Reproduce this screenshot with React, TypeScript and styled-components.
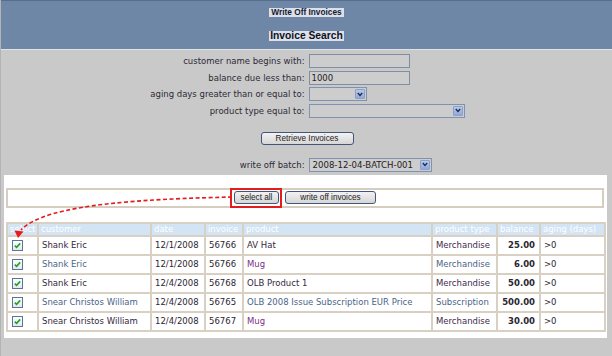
import React from "react";
import styled, { createGlobalStyle } from "styled-components";

const GlobalStyle = createGlobalStyle`
  html, body { margin: 0; padding: 0; }
  body {
    background: #c9c9c9;
    font-family: "DejaVu Sans", Verdana, sans-serif;
    font-size: 8.5px;
    color: #2e2a36;
  }
`;

const Page = styled.div`
  position: relative;
  width: 612px;
  height: 356px;
  overflow: hidden;
  background: #c9c9c9;
  box-sizing: border-box;
  border-left: 1px solid #b4b4b4;
`;

const Header = styled.header`
  height: 50px;
  box-sizing: border-box;
  background: #6f87a7;
  border-top: 1px solid #566d8e;
  border-bottom: 1px solid #dfe2e7;
  display: flex;
  flex-direction: column;
  align-items: center;
  padding-top: 7px;
`;

const AppTitle = styled.div`
  font-family: "Liberation Sans", Arial, sans-serif;
  font-weight: bold;
  font-size: 8.3px;
  line-height: 9px;
  color: #101a38;
  background: #dde0e6;
  padding: 0 2px;
`;

const SectionTitle = styled.div`
  margin-top: 14px;
  font-family: "Liberation Sans", Arial, sans-serif;
  font-weight: bold;
  font-size: 10.3px;
  line-height: 10px;
  color: #0a1028;
  background: #dde0e6;
  padding: 0 1px;
`;

const FormGrid = styled.div<{ $top: number }>`
  display: grid;
  grid-template-columns: 1fr 1fr;
  column-gap: 4px;
  row-gap: 2.6px;
  align-items: center;
  margin-top: ${(p) => p.$top}px;
`;

const Label = styled.label`
  text-align: right;
  line-height: 14px;
  white-space: nowrap;
  color: #2e2a36;
`;

const TextInput = styled.input<{ $w: number }>`
  width: ${(p) => p.$w}px;
  height: 14px;
  box-sizing: border-box;
  border: 1px solid #7f8fa3;
  background: #cdcdcd;
  font-family: "DejaVu Sans", Verdana, sans-serif;
  font-size: 8.5px;
  color: #222;
  padding: 0 2px;
  margin: 0;
  outline: none;
`;

const SelectBox = styled.div<{ $w: number }>`
  position: relative;
  width: ${(p) => p.$w}px;
  height: 14px;
  box-sizing: border-box;
  border: 1px solid #7f93b0;
  background: #cdcdcd;
  display: flex;
  align-items: center;
  padding-left: 3px;
  font-size: 8.6px;
  color: #222;
`;

const SelectArrow = styled.span`
  position: absolute;
  right: 1px;
  top: 1px;
  width: 10px;
  height: 10px;
  box-sizing: border-box;
  border: 1px solid #8aa0c6;
  border-radius: 1px;
  background: linear-gradient(#b6c8ec, #93a9d6);
  display: flex;
  align-items: center;
  justify-content: center;
`;

const ButtonRow = styled.div`
  display: flex;
  justify-content: center;
  margin-top: 14px;
  padding-left: 1px;
`;

const Button = styled.button<{ $w: number }>`
  width: ${(p) => p.$w}px;
  height: 13px;
  box-sizing: border-box;
  margin: 0;
  padding: 0;
  border: 1px solid #43567a;
  border-radius: 3px;
  background: linear-gradient(#f2f2f2, #d6d6d6);
  font-family: "Liberation Sans", Arial, sans-serif;
  font-size: 8.2px;
  line-height: 11px;
  color: #222;
`;

const Panel = styled.section`
  margin: 3px 5px 0 3px;
  height: 163px;
  box-sizing: border-box;
  background: #ffffff;
  padding: 13px 3px 0 2px;
`;

const ActionBox = styled.div`
  height: 20px;
  box-sizing: border-box;
  border: 2px solid #d5cdbf;
  display: flex;
  justify-content: center;
  align-items: center;
  gap: 3px;
  padding-right: 4px;
`;

const Highlight = styled.div`
  height: 20px;
  margin: -2px 0;
  box-sizing: border-box;
  border: 2px solid #e41c1c;
  display: flex;
  align-items: center;
  padding: 0 1px 0 2px;
`;

const Table = styled.table`
  margin-top: 14px;
  width: 598px;
  table-layout: fixed;
  border-collapse: collapse;
`;

const Th = styled.th`
  height: 11px;
  padding: 0 0 0 2px;
  border: 2px solid #d8d0c2;
  background: #d3e4f4;
  color: #ffffff;
  font-weight: normal;
  text-align: left;
  font-size: 8.5px;
  line-height: 10px;
  white-space: nowrap;
  overflow: hidden;
`;

const Td = styled.td<{ $tone?: string; $bold?: boolean; $right?: boolean }>`
  height: 17px;
  padding: 0 ${(p) => (p.$right ? "4px" : "0")} 0 3px;
  border: 2px solid #d8d0c2;
  color: ${(p) => p.$tone || "#2a2630"};
  font-weight: ${(p) => (p.$bold ? "bold" : "normal")};
  text-align: ${(p) => (p.$right ? "right" : "left")};
  font-size: 8.5px;
  white-space: nowrap;
  overflow: hidden;
`;

const CheckCell = styled.td`
  height: 17px;
  padding: 0 0 0 4px;
  border: 2px solid #d8d0c2;
`;

const CheckBox = styled.span`
  display: flex;
  width: 11px;
  height: 11px;
  box-sizing: border-box;
  border: 1px solid #5a749c;
  background: linear-gradient(#ffffff, #e4e8ee);
  align-items: center;
  justify-content: center;
`;

const Overlay = styled.svg`
  position: absolute;
  left: 0;
  top: 0;
  pointer-events: none;
`;

const DARK = "#34283e";
const BLUE = "#4a6588";
const PURPLE = "#7a2f86";

const rows = [
  { name: "Shank Eric", nt: DARK, date: "12/1/2008", inv: "56766", product: "AV Hat", pt: DARK, type: "Merchandise", tt: "#3e2a4c", bal: "25.00" },
  { name: "Shank Eric", nt: BLUE, date: "12/1/2008", inv: "56766", product: "Mug", pt: PURPLE, type: "Merchandise", tt: BLUE, bal: "6.00" },
  { name: "Shank Eric", nt: DARK, date: "12/4/2008", inv: "56768", product: "OLB Product 1", pt: DARK, type: "Merchandise", tt: "#3e2a4c", bal: "50.00" },
  { name: "Snear Christos William", nt: BLUE, date: "12/4/2008", inv: "56765", product: "OLB 2008 Issue Subscription EUR Price", pt: BLUE, type: "Subscription", tt: BLUE, bal: "500.00" },
  { name: "Snear Christos William", nt: DARK, date: "12/4/2008", inv: "56767", product: "Mug", pt: PURPLE, type: "Merchandise", tt: "#3e2a4c", bal: "30.00" },
];

const cols = [31, 113, 54, 38, 189, 65, 43, 65];
const heads = ["select", "customer", "date", "invoice", "product", "product type", "balance", "aging (days)"];

const Chevron = () => (
  <svg width="6" height="5" viewBox="0 0 6 5">
    <polyline points="0.8,1 3,3.4 5.2,1" fill="none" stroke="#1b2d5a" strokeWidth="1.4" />
  </svg>
);

const Check = () => (
  <svg width="9" height="9" viewBox="0 0 9 9">
    <polyline points="1.8,4.6 3.6,6.4 7.2,2.4" fill="none" stroke="#1fa324" strokeWidth="1.6" />
  </svg>
);

export default function App() {
  return (
    <>
      <GlobalStyle />
      <Page>
        <Header>
          <AppTitle>Write Off Invoices</AppTitle>
          <SectionTitle>Invoice Search</SectionTitle>
        </Header>

        <FormGrid $top={4}>
          <Label>customer name begins with:</Label>
          <div><TextInput $w={101} defaultValue="" /></div>
          <Label>balance due less than:</Label>
          <div><TextInput $w={101} defaultValue="1000" /></div>
          <Label>aging days greater than or equal to:</Label>
          <SelectBox $w={58}><SelectArrow><Chevron /></SelectArrow></SelectBox>
          <Label>product type equal to:</Label>
          <SelectBox $w={156}><SelectArrow><Chevron /></SelectArrow></SelectBox>
        </FormGrid>

        <ButtonRow>
          <Button $w={93}>Retrieve Invoices</Button>
        </ButtonRow>

        <FormGrid $top={13}>
          <Label>write off batch:</Label>
          <SelectBox $w={123}>
            2008-12-04-BATCH-001
            <SelectArrow><Chevron /></SelectArrow>
          </SelectBox>
        </FormGrid>

        <Panel>
          <ActionBox>
            <Highlight>
              <Button $w={45}>select all</Button>
            </Highlight>
            <Button $w={91}>write off invoices</Button>
          </ActionBox>

          <Table>
            <colgroup>
              {cols.map((w, i) => (
                <col key={i} style={{ width: w }} />
              ))}
            </colgroup>
            <thead>
              <tr>
                {heads.map((h) => (
                  <Th key={h}>{h}</Th>
                ))}
              </tr>
            </thead>
            <tbody>
              {rows.map((r, i) => (
                <tr key={i}>
                  <CheckCell>
                    <CheckBox><Check /></CheckBox>
                  </CheckCell>
                  <Td $tone={r.nt}>{r.name}</Td>
                  <Td>{r.date}</Td>
                  <Td>{r.inv}</Td>
                  <Td $tone={r.pt}>{r.product}</Td>
                  <Td $tone={r.tt}>{r.type}</Td>
                  <Td $bold $right>{r.bal}</Td>
                  <Td>&gt;0</Td>
                </tr>
              ))}
            </tbody>
          </Table>
        </Panel>

        <Overlay width="612" height="356" viewBox="0 0 612 356">
          <path
            d="M231 197 C 150 199, 45 203, 20 230"
            fill="none"
            stroke="#e41c1c"
            strokeWidth="1.6"
            strokeDasharray="4 2.5"
          />
          <polygon points="13.5,230.5 22.5,231.5 17,238" fill="#e41c1c" />
        </Overlay>
      </Page>
    </>
  );
}
